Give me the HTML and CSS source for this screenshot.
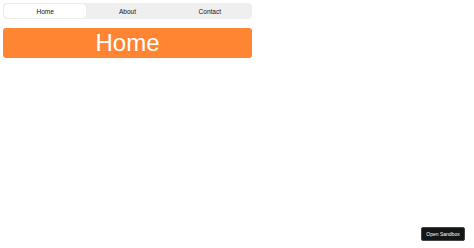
FILE: index.html
```html
<!DOCTYPE html>
<html>
<head>
<meta charset="utf-8">
<link rel="stylesheet" href="styles.css">
</head>
<body>
<div class="page">
  <nav class="tabs">
    <div class="tab active">Home</div>
    <div class="tab">About</div>
    <div class="tab">Contact</div>
  </nav>
  <div class="panel">Home</div>
</div>
<button class="sandbox">Open Sandbox</button>
</body>
</html>
```

FILE: styles.css
```css
html, body {
  margin: 0;
  padding: 0;
  background: #ffffff;
  font-family: "Liberation Sans", Arial, sans-serif;
}
.page {
  width: 249px;
  padding: 3px;
  display: flex;
  flex-direction: column;
  gap: 9px;
}
.tabs {
  display: flex;
  background: #efeff0;
  border-radius: 4px;
  padding: 1px;
  height: 14px;
}
.tab {
  flex: 1;
  display: flex;
  align-items: center;
  justify-content: center;
  font-size: 6.5px;
  color: #111;
  border-radius: 3px;
}
.tab.active {
  background: #ffffff;
  box-shadow: 0 0 1px rgba(0,0,0,0.15);
}
.panel {
  height: 30px;
  background: #ff8533;
  border-radius: 3px;
  color: #ffffff;
  font-size: 24px;
  display: flex;
  align-items: center;
  justify-content: center;
}
.sandbox {
  position: fixed;
  right: 9px;
  bottom: 7px;
  width: 44px;
  height: 14px;
  padding: 0;
  border: 1px solid #444;
  border-radius: 2px;
  background: #151515;
  color: #ffffff;
  font-family: "Liberation Sans", Arial, sans-serif;
  font-size: 5px;
}
```
